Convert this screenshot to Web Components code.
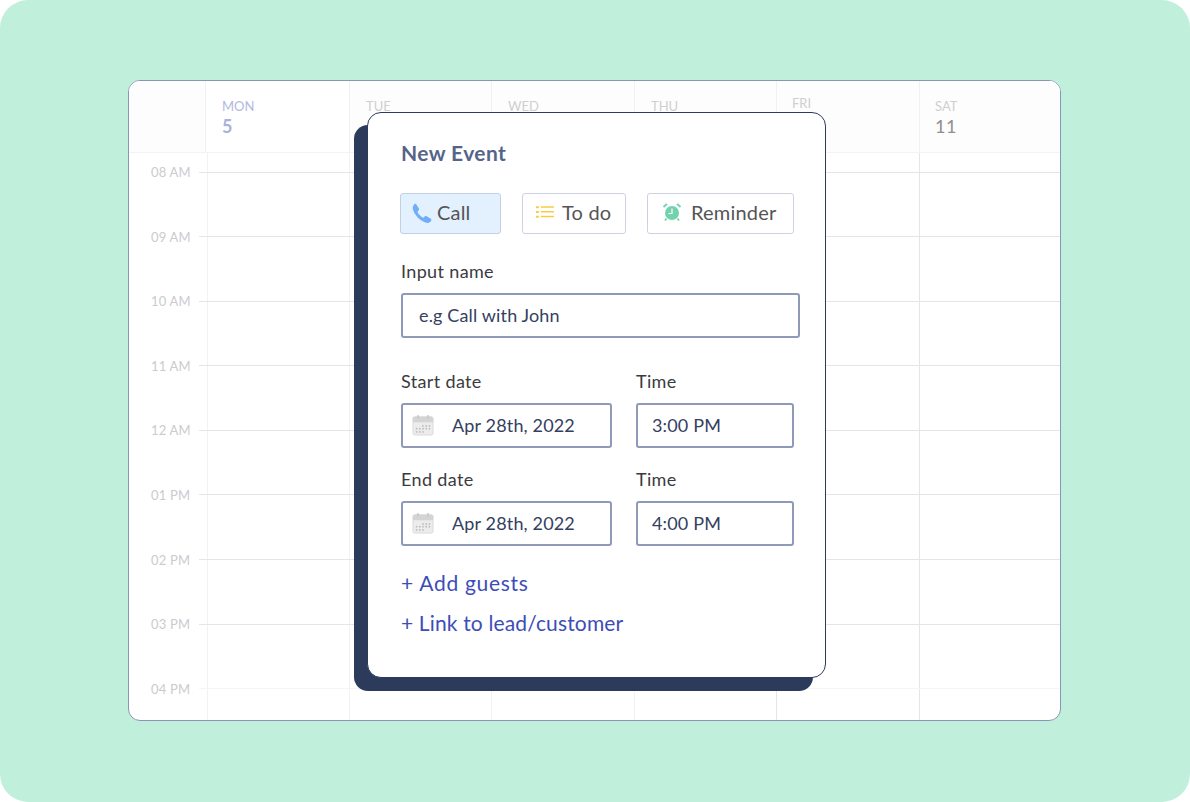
<!DOCTYPE html>
<html><head><meta charset="utf-8">
<style>
html,body{margin:0;padding:0;background:#fff;width:1190px;height:802px;overflow:hidden}
</style></head>
<body>
<sched-stage>
  <cal-board>
    <cal-day slot="head" name="MON" num="5" tone="active" pad="16"></cal-day>
    <cal-day slot="head" name="TUE" num="6" pad="16"></cal-day>
    <cal-day slot="head" name="WED" num="7" pad="16"></cal-day>
    <cal-day slot="head" name="THU" num="8" pad="16"></cal-day>
    <cal-day slot="head" name="FRI" num="10" tone="high" pad="15"></cal-day>
    <cal-day slot="head" name="SAT" num="11" pad="15"></cal-day>
    <event-dialog slot="overlay"></event-dialog>
  </cal-board>
</sched-stage>
<script>
const FONT='"Lato","Noto Sans",sans-serif';
class SchedStage extends HTMLElement{constructor(){super();this.attachShadow({mode:'open'}).innerHTML=`<style>
:host{display:block;width:1190px;height:802px;box-sizing:border-box;background:#c0f0dc;border-radius:28px;padding:80px 129px 81px 128px;font-family:${FONT}}
</style><slot></slot>`}}
customElements.define('sched-stage',SchedStage);

class CalDay extends HTMLElement{constructor(){super();const n=this.getAttribute('name'),d=this.getAttribute('num'),t=this.getAttribute('tone')||'',p=this.getAttribute('pad');
this.attachShadow({mode:'open'}).innerHTML=`<style>
:host{display:block;box-sizing:border-box;padding:${t==='high'?'14':'17'}px 0 0 ${p}px;border-left:1px solid #f1f1f3;background:${t==='active'?'#fff':'#fdfdfd'};height:100%}
.n{font-size:13px;line-height:16px;color:${t==='active'?'#b2b8e0':'#cfcfd2'};font-weight:400}
.d{font-size:18px;line-height:24px;letter-spacing:.6px;color:${t==='active'?'#aab1dd':'#8f8f92'};${t==='active'?'font-weight:700;':''}}
</style><div class="n">${n}</div><div class="d">${d}</div>`}}
customElements.define('cal-day',CalDay);

class CalBoard extends HTMLElement{constructor(){super();
const hours=['08 AM','09 AM','10 AM','11 AM','12 AM','01 PM','02 PM','03 PM','04 PM'];
const rows=hours.map((h,i)=>`<div class="row ${i===8?'last':''}"><span class="lab">${h}</span><i></i></div>`).join('');
this.attachShadow({mode:'open'}).innerHTML=`<style>
:host{display:block;position:relative;box-sizing:border-box;height:641px;border:1px solid #8b94b5;border-radius:12px;background:#fff}
.clip{height:100%;border-radius:11px;overflow:hidden;display:flex;flex-direction:column}
.head{display:grid;grid-template-columns:76px 144px 142px 143px 142px 143px 1fr;height:71px;background:#fdfdfd;border-bottom:1px solid #f3f3f5;flex:none}
.body{flex:1;display:grid;min-height:0}
.cols,.rows{grid-area:1/1}
.cols{display:grid;grid-template-columns:78px 142px 142px 143px 142px 143px 1fr}
.cols div{border-left:1px solid #f2f2f4}
.cols div:first-child{border:0}
.cols div:nth-child(n+6){border-left-color:#e5e5e8}
.rows{padding-top:9px;display:flex;flex-direction:column}
.row{flex:none;display:flex;align-items:center;height:20px;margin-bottom:44.6px}
.lab{width:70px;box-sizing:border-box;padding-left:22px;font-size:13px;letter-spacing:.2px;color:#cbcbce;white-space:nowrap}
.row i{flex:1;height:1px;background:#e5e5e8}
.row.last i{background:#f5f5f6}
</style><div class="clip"><div class="head"><span></span><slot name="head"></slot></div>
<div class="body"><div class="cols"><div></div><div></div><div></div><div></div><div></div><div></div><div></div></div><div class="rows">${rows}</div></div></div><slot name="overlay"></slot>`}}
customElements.define('cal-board',CalBoard);

class KindBtn extends HTMLElement{constructor(){super();const on=this.hasAttribute('on');
this.attachShadow({mode:'open'}).innerHTML=`<style>
:host{display:inline-flex;align-items:center;box-sizing:border-box;height:41px;padding-bottom:3px;border:1px solid ${on?'#c3d0e4':'#cdd2e3'};border-radius:3px;background:${on?'#e3f0fe':'#fff'};font-size:20px;color:#555;white-space:nowrap;letter-spacing:.2px}
</style><slot></slot>`}}
customElements.define('kind-btn',KindBtn);

class FieldBox extends HTMLElement{constructor(){super();
this.attachShadow({mode:'open'}).innerHTML=`<style>
:host{display:flex;flex-direction:column}
label{font-size:18px;line-height:22px;color:#3b3b3f;margin-bottom:11px;letter-spacing:.35px}
.box{height:45px;box-sizing:border-box;padding-bottom:2px;border:2px solid #8f99b8;border-radius:3px;display:flex;align-items:center;color:#34405f;font-size:18px;letter-spacing:.15px;white-space:nowrap;background:#fff}
</style><label>${this.getAttribute('label')}</label><div class="box" part="box"><slot></slot></div>`}}
customElements.define('field-box',FieldBox);

const CAL=`<svg width="22" height="22" viewBox="0 0 24 24" style="margin:0 18px 0 9px;flex:none"><rect x="1" y="3" width="22" height="20" rx="2" fill="#ececec" stroke="#dadada"/><path d="M1 5a2 2 0 0 1 2-2h18a2 2 0 0 1 2 2v4H1z" fill="#d4d4d4"/><rect x="5.5" y="1" width="2" height="4" rx="1" fill="#c8c8c8"/><rect x="16.5" y="1" width="2" height="4" rx="1" fill="#c8c8c8"/><g fill="#bdbdbd"><circle cx="12" cy="13" r="1"/><circle cx="15.5" cy="13" r="1"/><circle cx="19" cy="13" r="1"/><circle cx="5" cy="16" r="1"/><circle cx="8.5" cy="16" r="1"/><circle cx="12" cy="16" r="1"/><circle cx="15.5" cy="16" r="1"/><circle cx="19" cy="16" r="1"/><circle cx="5" cy="19.5" r="1"/><circle cx="8.5" cy="19.5" r="1"/><circle cx="12" cy="19.5" r="1"/></g></svg>`;

class EventDialog extends HTMLElement{constructor(){super();
this.attachShadow({mode:'open'}).innerHTML=`<style>
:host{position:absolute;left:238px;top:31px;width:459px;height:566px;box-sizing:border-box;display:block;background:#fff;border:1px solid #2c3a5c;border-radius:14px;box-shadow:-13px 13px 0 0 #2c3a5c;padding:27px 25px 0 33px;font-family:inherit}
h2{margin:0 0 27px;font-size:21px;line-height:26px;font-weight:700;color:#56648a;letter-spacing:.4px}
.kinds{display:flex;margin-left:-1px;}
.kinds kind-btn:nth-child(1){width:101px;padding-left:10px;margin-right:21px}
.kinds kind-btn:nth-child(2){width:104px;padding-left:13px;margin-right:21px}
.kinds kind-btn:nth-child(3){width:147px;padding-left:14px}
svg{flex:none}
.name{margin-top:26px}
.name::part(box){padding-left:16px}
.pair{display:grid;grid-template-columns:211px 158px;column-gap:24px;margin-top:32px;width:393px}
.pair + .pair{margin-top:20px}
.pair field-box:last-child::part(box){padding-left:14px}
.link{color:#3d4db7;font-size:21px;line-height:26px;letter-spacing:.15px}
.link.a{letter-spacing:.7px}
.links{margin-top:24px;display:flex;flex-direction:column;gap:14px}
</style>
<h2>New Event</h2>
<div class="kinds">
<kind-btn on><svg width="22" height="22" viewBox="0 0 24 24" style="margin:2px 4px 0 0"><path d="M5.500 2.200 8.600 7c.5.8.3 1.600-.3 2.200L7 10.500c1.300 3 3.600 5.300 6.500 6.600l1.400-1.300c.6-.6 1.500-.7 2.200-.2l4.500 2.800c.7.5.9 1.300.4 2-1 1.600-2.500 2.700-4 2.400C10 21.300 3.500 14 2 7.600 1.500 5.500 2.600 3.500 4 2.200c.5-.4 1.100-.4 1.500 0z" fill="#70aef8"/></svg>Call</kind-btn>
<kind-btn><svg width="18" height="14" viewBox="0 0 19 14" style="margin-right:8px"><g fill="#fcc93a"><rect y="1" width="3" height="2"/><rect y="6" width="3" height="2"/><rect y="11" width="3" height="2"/><rect x="5" y="1" width="14" height="1.500"/><rect x="5" y="6" width="14" height="1.500"/><rect x="5" y="11" width="14" height="1.500"/></g></svg>To do</kind-btn>
<kind-btn><svg width="20" height="20" viewBox="0 0 20 20" style="margin-right:9px"><circle cx="10" cy="11" r="7" fill="#72d2ab"/><path d="M10 6.500V11.500H6.500" fill="none" stroke="#fff" stroke-width="1.200"/><path d="M1.500 5 5 1.800M18.500 5 15 1.800M4.500 16.500 3 18.500M15.500 16.500 17 18.500" stroke="#72d2ab" stroke-width="1.800" fill="none"/></svg>Reminder</kind-btn>
</div>
<field-box class="name" label="Input name">e.g Call with John</field-box>
<div class="pair"><field-box label="Start date">${CAL}Apr 28th, 2022</field-box><field-box label="Time">3:00 PM</field-box></div>
<div class="pair"><field-box label="End date">${CAL}Apr 28th, 2022</field-box><field-box label="Time">4:00 PM</field-box></div>
<div class="links"><span class="link a">+ Add guests</span><span class="link">+ Link to lead/customer</span></div>`}}
customElements.define('event-dialog',EventDialog);
</script>
</body></html>
